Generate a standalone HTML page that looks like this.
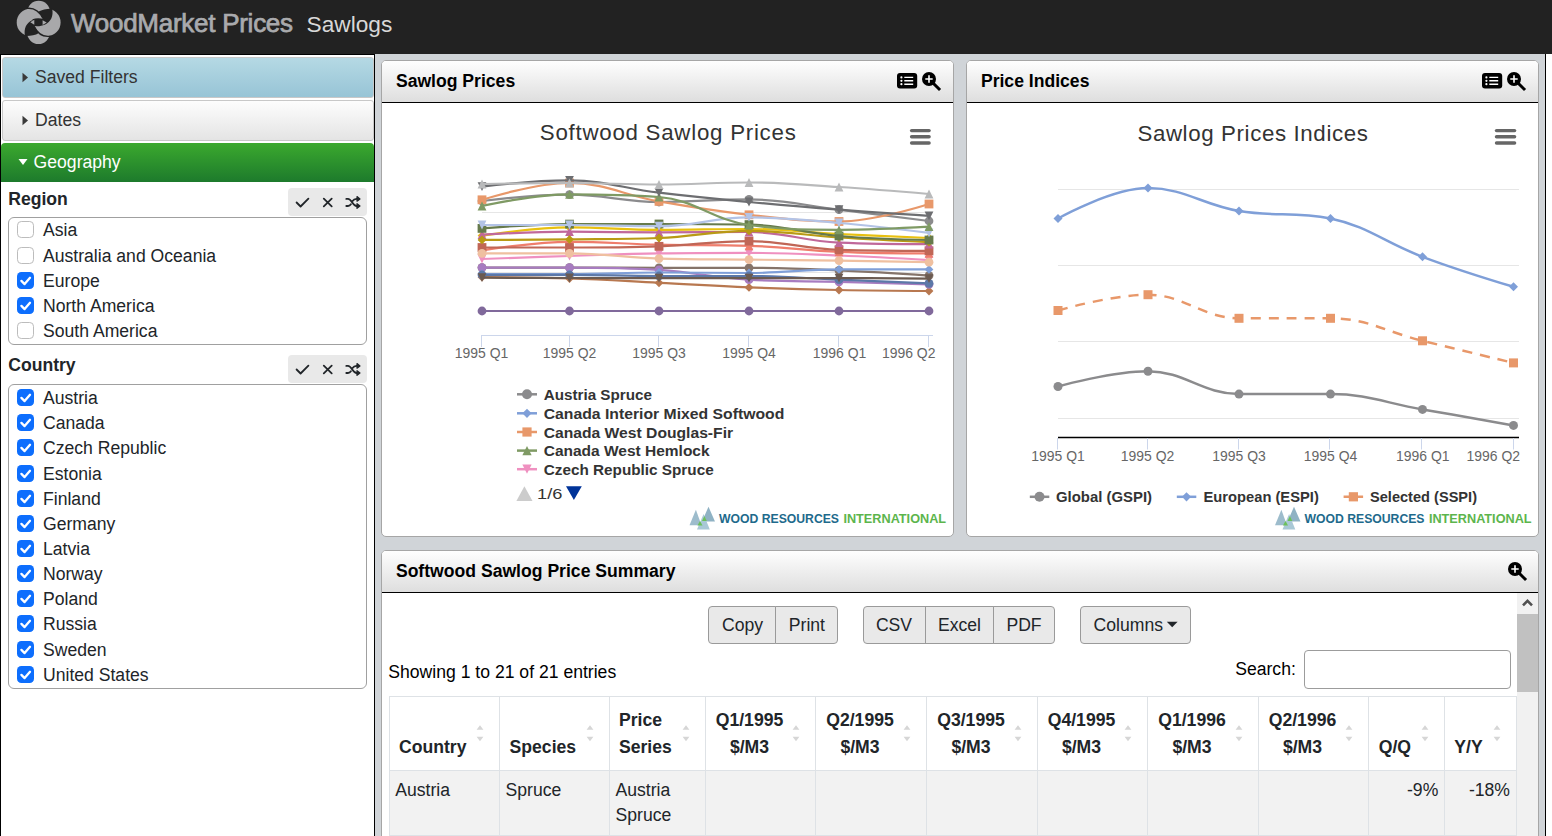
<!DOCTYPE html>
<html><head><meta charset="utf-8">
<style>
*{box-sizing:border-box;}
html,body{margin:0;padding:0;width:1552px;height:836px;overflow:hidden;background:#fff;font-family:"Liberation Sans",sans-serif;color:#212529;}
.a{position:absolute;}
.t{position:absolute;white-space:nowrap;line-height:1;}
#hdr{left:0;top:0;width:1552px;height:54px;background:#222;}
#side{left:0;top:54px;width:375px;height:800px;border:1px solid #000;border-bottom:none;background:#fff;}
#main{left:375px;top:54px;width:1171px;height:800px;background:#d0d4d8;border-right:1px solid #000;}
.acc{position:absolute;left:2px;width:372px;height:41px;border:1px solid #c8c8c8;border-radius:3px;}
.acc .lbl{position:absolute;left:32px;font-size:17.6px;line-height:1;white-space:nowrap;color:#333;}
.tb{position:absolute;left:288px;width:79px;height:28px;background:#e9e9e9;border-radius:4px;}
.fs{position:absolute;left:8px;width:359px;border:1px solid #a0a0a0;border-radius:6px;}
.ck{position:absolute;left:17px;width:17.4px;height:17.6px;border-radius:4.3px;}
.ck.on{background:#0d6efd;}
.ck.off{border:1px solid #bcbcbc;background:#fff;}
.cl{position:absolute;left:43px;font-size:17.6px;line-height:1;white-space:nowrap;color:#212529;}
.pnl{position:absolute;background:#fff;border:1px solid #a6a6a6;border-radius:5px;overflow:hidden;}
.ph{position:absolute;left:0;top:0;right:0;height:42px;background:linear-gradient(#fefefe,#dedede);border-bottom:1px solid #000;}
.pt{position:absolute;font-weight:bold;font-size:17.6px;line-height:1;white-space:nowrap;color:#000;}
.btn{position:absolute;top:606px;height:38px;background:#e9e9e9;border:1px solid #9a9a9a;}
.bt{position:absolute;font-size:17.6px;line-height:1;white-space:nowrap;color:#212529;}
.th{position:absolute;font-weight:bold;font-size:17.6px;line-height:1;white-space:nowrap;color:#212529;}
.td{position:absolute;font-size:17.6px;line-height:1;white-space:nowrap;color:#212529;}
.vl{position:absolute;width:1px;background:#dee2e6;}
.hc{font-family:"Liberation Sans",sans-serif;}
</style></head><body>
<div id="hdr" class="a">
<svg class="a" style="left:14px;top:0px" width="50" height="46" viewBox="0 0 50 46">
<g fill="#a8a8aa">
<circle cx="24.7" cy="12" r="11.3"/>
<circle cx="24.5" cy="32.6" r="11.4"/>
<circle cx="16.3" cy="22.4" r="13.6"/>
<circle cx="33" cy="22.4" r="13.6"/>
</g>
<path d="M24.2 11.8 C 28.5 9.4, 33 8.6, 38.2 8.8 C 39.6 16, 37 22, 30.8 24.8 C 29.6 20, 27.5 15, 24.2 11.8 Z" fill="#222"/>
<path d="M25.0 33.0 C 20.7 35.4, 16.2 36.2, 11.0 36.0 C 9.6 28.8, 12.2 22.8, 18.4 20.0 C 19.6 24.8, 21.7 29.8, 25.0 33.0 Z" fill="#222"/>
<path d="M18.5 19.2 C 22 17.8 26.5 17.8 30.5 19.4 L 31 24.5 C 27 26.5 22 26.7 18.3 25.6 Z" fill="#222"/>
<path d="M16.3 22.3 L 20.3 19.8 L 20.3 24.8 Z M 32.7 22.6 L 28.6 20.2 L 28.6 25.0 Z" fill="#a8a8aa"/>
<path d="M12.8 8.4 C 19 7.6, 25 10.5, 29 18.5" stroke="#222" stroke-width="1.3" fill="none"/>
<path d="M36.4 36.2 C 30 37.2, 24 34.5, 20.2 26.4" stroke="#222" stroke-width="1.3" fill="none"/>
<path d="M38 9 C 39 8.2 38.5 8.5 38.2 8.4" stroke="#222" stroke-width="1" fill="none"/>
</svg>
<div class="t" style="left:71px;top:10px;font-size:26px;font-weight:normal;color:#a9aaad;letter-spacing:-0.27px;-webkit-text-stroke:0.75px #a9aaad;">WoodMarket Prices</div>
<div class="t" style="left:306.5px;top:13px;font-size:22.7px;color:#d8d8d8;">Sawlogs</div>
</div>

<div id="side" class="a"></div>
<div id="main" class="a"></div>

<!-- sidebar accordion -->
<div class="acc" style="top:57px;background:linear-gradient(#b5d9e4,#97c4d6);">
 <svg class="a" style="left:18.2px;top:14.3px" width="8" height="11"><path d="M1.5 0.8 L7 5.5 L1.5 10.2 Z" fill="#3a3a3a"/></svg>
 <div class="lbl" style="top:10.6px;">Saved Filters</div>
</div>
<div class="acc" style="top:100px;background:linear-gradient(#fdfdfd,#e4e4e4);">
 <svg class="a" style="left:18.2px;top:14.3px" width="8" height="11"><path d="M1.5 0.8 L7 5.5 L1.5 10.2 Z" fill="#3a3a3a"/></svg>
 <div class="lbl" style="top:10.9px;">Dates</div>
</div>
<div class="a" style="left:1px;top:143px;width:373px;height:39px;border-radius:4px 4px 0 0;background:linear-gradient(#3ba92e,#1d7a2c);">
 <svg class="a" style="left:16px;top:15px" width="12" height="8"><path d="M1.5 1 L10.5 1 L6 7 Z" fill="#fff"/></svg>
 <div class="lbl" style="position:absolute;left:32.6px;top:10.6px;font-size:17.6px;line-height:1;color:#fff;white-space:nowrap;">Geography</div>
</div>

<div class="pt" style="left:8.2px;top:190.8px;color:#212529;">Region</div>
<div class="tb" style="top:188px;"><svg class="a" style="left:0;top:0" width="79" height="28">
<path d="M8.6 14.5 L12.6 18.5 L20.4 10.7" stroke="#212529" stroke-width="1.8" fill="none" stroke-linecap="round" stroke-linejoin="round"/>
<path d="M35.8 10.7 L43.7 18.3 M43.7 10.7 L35.8 18.3" stroke="#212529" stroke-width="1.8" fill="none" stroke-linecap="round"/>
<path d="M58.3 10.9 L60 10.9 C63.5 10.9 65 18 68.5 18 L69.5 18 M58.3 18 L60 18 C61.5 18 62.3 17.2 62.9 16.3 M64.6 13 C65.5 11.6 66.8 10.9 68.5 10.9 L69.5 10.9" stroke="#212529" stroke-width="1.8" fill="none" stroke-linecap="round"/>
<path d="M69 8.6 L72 10.9 L69 13.2 Z M69 15.7 L72 18 L69 20.4 Z" fill="#212529" stroke="#212529" stroke-width="1.2" stroke-linejoin="round"/>
</svg></div>
<div class="fs" style="top:217px;height:128px;"></div>
<div class="ck off" style="top:220.80px"></div>
<div class="cl" style="top:221.60px">Asia</div>
<div class="ck off" style="top:246.80px"></div>
<div class="cl" style="top:247.60px">Australia and Oceania</div>
<div class="ck on" style="top:271.80px"><svg width="18" height="18" style="position:absolute;left:0;top:0"><path d="M4.4 8.9 L7.6 12.1 L13 5.8" stroke="#fff" stroke-width="2.3" fill="none" stroke-linecap="round" stroke-linejoin="round"/></svg></div>
<div class="cl" style="top:272.60px">Europe</div>
<div class="ck on" style="top:296.80px"><svg width="18" height="18" style="position:absolute;left:0;top:0"><path d="M4.4 8.9 L7.6 12.1 L13 5.8" stroke="#fff" stroke-width="2.3" fill="none" stroke-linecap="round" stroke-linejoin="round"/></svg></div>
<div class="cl" style="top:297.60px">North America</div>
<div class="ck off" style="top:321.80px"></div>
<div class="cl" style="top:322.60px">South America</div>

<div class="pt" style="left:8.2px;top:357px;color:#212529;">Country</div>
<div class="tb" style="top:355px;"><svg class="a" style="left:0;top:0" width="79" height="28">
<path d="M8.6 14.5 L12.6 18.5 L20.4 10.7" stroke="#212529" stroke-width="1.8" fill="none" stroke-linecap="round" stroke-linejoin="round"/>
<path d="M35.8 10.7 L43.7 18.3 M43.7 10.7 L35.8 18.3" stroke="#212529" stroke-width="1.8" fill="none" stroke-linecap="round"/>
<path d="M58.3 10.9 L60 10.9 C63.5 10.9 65 18 68.5 18 L69.5 18 M58.3 18 L60 18 C61.5 18 62.3 17.2 62.9 16.3 M64.6 13 C65.5 11.6 66.8 10.9 68.5 10.9 L69.5 10.9" stroke="#212529" stroke-width="1.8" fill="none" stroke-linecap="round"/>
<path d="M69 8.6 L72 10.9 L69 13.2 Z M69 15.7 L72 18 L69 20.4 Z" fill="#212529" stroke="#212529" stroke-width="1.2" stroke-linejoin="round"/>
</svg></div>
<div class="fs" style="top:384px;height:305px;"></div>
<div class="ck on" style="top:388.80px"><svg width="18" height="18" style="position:absolute;left:0;top:0"><path d="M4.4 8.9 L7.6 12.1 L13 5.8" stroke="#fff" stroke-width="2.3" fill="none" stroke-linecap="round" stroke-linejoin="round"/></svg></div>
<div class="cl" style="top:389.60px">Austria</div>
<div class="ck on" style="top:413.80px"><svg width="18" height="18" style="position:absolute;left:0;top:0"><path d="M4.4 8.9 L7.6 12.1 L13 5.8" stroke="#fff" stroke-width="2.3" fill="none" stroke-linecap="round" stroke-linejoin="round"/></svg></div>
<div class="cl" style="top:414.60px">Canada</div>
<div class="ck on" style="top:438.80px"><svg width="18" height="18" style="position:absolute;left:0;top:0"><path d="M4.4 8.9 L7.6 12.1 L13 5.8" stroke="#fff" stroke-width="2.3" fill="none" stroke-linecap="round" stroke-linejoin="round"/></svg></div>
<div class="cl" style="top:439.60px">Czech Republic</div>
<div class="ck on" style="top:464.80px"><svg width="18" height="18" style="position:absolute;left:0;top:0"><path d="M4.4 8.9 L7.6 12.1 L13 5.8" stroke="#fff" stroke-width="2.3" fill="none" stroke-linecap="round" stroke-linejoin="round"/></svg></div>
<div class="cl" style="top:465.60px">Estonia</div>
<div class="ck on" style="top:489.80px"><svg width="18" height="18" style="position:absolute;left:0;top:0"><path d="M4.4 8.9 L7.6 12.1 L13 5.8" stroke="#fff" stroke-width="2.3" fill="none" stroke-linecap="round" stroke-linejoin="round"/></svg></div>
<div class="cl" style="top:490.60px">Finland</div>
<div class="ck on" style="top:514.80px"><svg width="18" height="18" style="position:absolute;left:0;top:0"><path d="M4.4 8.9 L7.6 12.1 L13 5.8" stroke="#fff" stroke-width="2.3" fill="none" stroke-linecap="round" stroke-linejoin="round"/></svg></div>
<div class="cl" style="top:515.60px">Germany</div>
<div class="ck on" style="top:539.80px"><svg width="18" height="18" style="position:absolute;left:0;top:0"><path d="M4.4 8.9 L7.6 12.1 L13 5.8" stroke="#fff" stroke-width="2.3" fill="none" stroke-linecap="round" stroke-linejoin="round"/></svg></div>
<div class="cl" style="top:540.60px">Latvia</div>
<div class="ck on" style="top:564.80px"><svg width="18" height="18" style="position:absolute;left:0;top:0"><path d="M4.4 8.9 L7.6 12.1 L13 5.8" stroke="#fff" stroke-width="2.3" fill="none" stroke-linecap="round" stroke-linejoin="round"/></svg></div>
<div class="cl" style="top:565.60px">Norway</div>
<div class="ck on" style="top:589.80px"><svg width="18" height="18" style="position:absolute;left:0;top:0"><path d="M4.4 8.9 L7.6 12.1 L13 5.8" stroke="#fff" stroke-width="2.3" fill="none" stroke-linecap="round" stroke-linejoin="round"/></svg></div>
<div class="cl" style="top:590.60px">Poland</div>
<div class="ck on" style="top:614.80px"><svg width="18" height="18" style="position:absolute;left:0;top:0"><path d="M4.4 8.9 L7.6 12.1 L13 5.8" stroke="#fff" stroke-width="2.3" fill="none" stroke-linecap="round" stroke-linejoin="round"/></svg></div>
<div class="cl" style="top:615.60px">Russia</div>
<div class="ck on" style="top:640.80px"><svg width="18" height="18" style="position:absolute;left:0;top:0"><path d="M4.4 8.9 L7.6 12.1 L13 5.8" stroke="#fff" stroke-width="2.3" fill="none" stroke-linecap="round" stroke-linejoin="round"/></svg></div>
<div class="cl" style="top:641.60px">Sweden</div>
<div class="ck on" style="top:665.80px"><svg width="18" height="18" style="position:absolute;left:0;top:0"><path d="M4.4 8.9 L7.6 12.1 L13 5.8" stroke="#fff" stroke-width="2.3" fill="none" stroke-linecap="round" stroke-linejoin="round"/></svg></div>
<div class="cl" style="top:666.60px">United States</div>

<!-- panels -->
<div class="pnl" style="left:381px;top:60px;width:573px;height:477px;">
 <div class="ph"></div>
 <div class="pt" style="left:13.9px;top:11.5px;">Sawlog Prices</div>
 <svg class="a" style="left:514.9px;top:11.9px" width="21" height="16">
<rect x="0" y="0" width="20.2" height="15.4" rx="3" fill="#000"/>
<circle cx="4.4" cy="4.4" r="1.1" fill="#fff"/><circle cx="4.4" cy="7.8" r="1.1" fill="#fff"/><circle cx="4.4" cy="11.2" r="1.1" fill="#fff"/>
<path d="M7.3 4.4 H16.2 M7.3 7.8 H16.2 M7.3 11.2 H16.2" stroke="#fff" stroke-width="1.4"/>
</svg><svg class="a" style="left:538.1px;top:8.9px" width="22" height="22">
<circle cx="9" cy="9" r="7" fill="#000"/>
<path d="M13 13 L19 19" stroke="#000" stroke-width="3" stroke-linecap="square"/>
<path d="M9 5.3 V12.7 M5.3 9 H12.7" stroke="#fff" stroke-width="1.6"/>
</svg>
</div>
<div class="pnl" style="left:966px;top:60px;width:573px;height:477px;">
 <div class="ph"></div>
 <div class="pt" style="left:13.9px;top:11.5px;">Price Indices</div>
 <svg class="a" style="left:514.9px;top:11.9px" width="21" height="16">
<rect x="0" y="0" width="20.2" height="15.4" rx="3" fill="#000"/>
<circle cx="4.4" cy="4.4" r="1.1" fill="#fff"/><circle cx="4.4" cy="7.8" r="1.1" fill="#fff"/><circle cx="4.4" cy="11.2" r="1.1" fill="#fff"/>
<path d="M7.3 4.4 H16.2 M7.3 7.8 H16.2 M7.3 11.2 H16.2" stroke="#fff" stroke-width="1.4"/>
</svg><svg class="a" style="left:538.1px;top:8.9px" width="22" height="22">
<circle cx="9" cy="9" r="7" fill="#000"/>
<path d="M13 13 L19 19" stroke="#000" stroke-width="3" stroke-linecap="square"/>
<path d="M9 5.3 V12.7 M5.3 9 H12.7" stroke="#fff" stroke-width="1.6"/>
</svg>
</div>
<div class="pnl" style="left:381px;top:550px;width:1158px;height:320px;">
 <div class="ph"></div>
 <div class="pt" style="left:13.9px;top:11.5px;">Softwood Sawlog Price Summary</div>
 <svg class="a" style="left:1123.6px;top:9.3px" width="22" height="22">
<circle cx="9" cy="9" r="7" fill="#000"/>
<path d="M13 13 L19 19" stroke="#000" stroke-width="3" stroke-linecap="square"/>
<path d="M9 5.3 V12.7 M5.3 9 H12.7" stroke="#fff" stroke-width="1.6"/>
</svg>
</div>

<svg class="a" style="left:0;top:0;pointer-events:none" width="1552" height="836" font-family="Liberation Sans, sans-serif">
<text x="539.8" y="140" font-size="22.3" fill="#333" text-anchor="start" font-weight="normal" textLength="256" lengthAdjust="spacing">Softwood Sawlog Prices</text>
<path d="M911.6 130.6 H929.1" stroke="#666" stroke-width="3.4" stroke-linecap="round"/><path d="M911.6 136.8 H929.1" stroke="#666" stroke-width="3.4" stroke-linecap="round"/><path d="M911.6 143 H929.1" stroke="#666" stroke-width="3.4" stroke-linecap="round"/>
<path d="M482 212.5 H933" stroke="#e6e6e6" stroke-width="1"/>
<path d="M482 272.5 H933" stroke="#e6e6e6" stroke-width="1"/>
<path d="M481 335.5 H933" stroke="#ccd6eb" stroke-width="1"/>
<path d="M481.5 335 V347" stroke="#ccd6eb" stroke-width="1"/>
<path d="M569.5 335 V347" stroke="#ccd6eb" stroke-width="1"/>
<path d="M658.5 335 V347" stroke="#ccd6eb" stroke-width="1"/>
<path d="M748.5 335 V347" stroke="#ccd6eb" stroke-width="1"/>
<path d="M838.5 335 V347" stroke="#ccd6eb" stroke-width="1"/>
<path d="M928.5 335 V347" stroke="#ccd6eb" stroke-width="1"/>
<text x="481.5" y="358.2" font-size="14" fill="#666" text-anchor="middle" font-weight="normal" textLength="53.5" lengthAdjust="spacingAndGlyphs">1995 Q1</text>
<text x="569.5" y="358.2" font-size="14" fill="#666" text-anchor="middle" font-weight="normal" textLength="53.5" lengthAdjust="spacingAndGlyphs">1995 Q2</text>
<text x="659" y="358.2" font-size="14" fill="#666" text-anchor="middle" font-weight="normal" textLength="53.5" lengthAdjust="spacingAndGlyphs">1995 Q3</text>
<text x="749" y="358.2" font-size="14" fill="#666" text-anchor="middle" font-weight="normal" textLength="53.5" lengthAdjust="spacingAndGlyphs">1995 Q4</text>
<text x="839.6" y="358.2" font-size="14" fill="#666" text-anchor="middle" font-weight="normal" textLength="53.5" lengthAdjust="spacingAndGlyphs">1996 Q1</text>
<text x="908.7" y="358.2" font-size="14" fill="#666" text-anchor="middle" font-weight="normal" textLength="53.5" lengthAdjust="spacingAndGlyphs">1996 Q2</text>
<path d="M 482.0 311.0 C 482.0 311.0 534.5 311.0 569.5 311.0 C 605.3 311.0 623.2 311.0 659.0 311.0 C 695.0 311.0 713.0 311.0 749.0 311.0 C 785.0 311.0 803.0 311.0 839.0 311.0 C 875.0 311.0 929.0 311.0 929.0 311.0" fill="none" stroke="#80699b" stroke-width="2.2"/>
<circle cx="482.0" cy="311.0" r="4.4" fill="#80699b"/>
<circle cx="569.5" cy="311.0" r="4.4" fill="#80699b"/>
<circle cx="659.0" cy="311.0" r="4.4" fill="#80699b"/>
<circle cx="749.0" cy="311.0" r="4.4" fill="#80699b"/>
<circle cx="839.0" cy="311.0" r="4.4" fill="#80699b"/>
<circle cx="929.0" cy="311.0" r="4.4" fill="#80699b"/>
<path d="M 482.0 277.2 C 482.0 277.2 534.5 277.4 569.5 278.5 C 605.3 279.6 623.2 281.0 659.0 282.8 C 695.0 284.6 713.0 286.0 749.0 287.4 C 785.0 288.8 803.0 289.3 839.0 290.0 C 875.0 290.7 929.0 291.0 929.0 291.0" fill="none" stroke="#b87850" stroke-width="2.2"/>
<path d="M 482.0 272.8 L 486.4 277.2 L 482.0 281.6 L 477.6 277.2 Z" fill="#b87850"/>
<path d="M 569.5 274.1 L 573.9 278.5 L 569.5 282.9 L 565.1 278.5 Z" fill="#b87850"/>
<path d="M 659.0 278.4 L 663.4 282.8 L 659.0 287.2 L 654.6 282.8 Z" fill="#b87850"/>
<path d="M 749.0 283.0 L 753.4 287.4 L 749.0 291.8 L 744.6 287.4 Z" fill="#b87850"/>
<path d="M 839.0 285.6 L 843.4 290.0 L 839.0 294.4 L 834.6 290.0 Z" fill="#b87850"/>
<path d="M 929.0 286.6 L 933.4 291.0 L 929.0 295.4 L 924.6 291.0 Z" fill="#b87850"/>
<path d="M 482.0 267.6 C 482.0 267.6 534.5 267.6 569.5 267.6 C 605.3 267.6 623.2 267.8 659.0 267.8 C 695.0 267.8 713.0 267.8 749.0 267.8 C 785.0 267.8 803.0 268.8 839.0 270.4 C 875.0 272.0 929.0 275.6 929.0 275.6" fill="none" stroke="#85746a" stroke-width="2.2"/>
<circle cx="482.0" cy="267.6" r="4.4" fill="#85746a"/>
<circle cx="569.5" cy="267.6" r="4.4" fill="#85746a"/>
<circle cx="659.0" cy="267.8" r="4.4" fill="#85746a"/>
<circle cx="749.0" cy="267.8" r="4.4" fill="#85746a"/>
<circle cx="839.0" cy="270.4" r="4.4" fill="#85746a"/>
<circle cx="929.0" cy="275.6" r="4.4" fill="#85746a"/>
<path d="M 482.0 267.6 C 482.0 267.6 534.5 267.6 569.5 267.6 C 605.3 267.6 623.2 267.6 659.0 269.9 C 695.0 272.2 713.0 277.6 749.0 279.7 C 785.0 281.8 803.0 280.9 839.0 281.8 C 875.0 282.7 929.0 284.3 929.0 284.3" fill="none" stroke="#a77cc0" stroke-width="2.2"/>
<circle cx="482.0" cy="267.6" r="4.4" fill="#a77cc0"/>
<circle cx="569.5" cy="267.6" r="4.4" fill="#a77cc0"/>
<circle cx="659.0" cy="269.9" r="4.4" fill="#a77cc0"/>
<circle cx="749.0" cy="279.7" r="4.4" fill="#a77cc0"/>
<circle cx="839.0" cy="281.8" r="4.4" fill="#a77cc0"/>
<circle cx="929.0" cy="284.3" r="4.4" fill="#a77cc0"/>
<path d="M 482.0 274.0 C 482.0 274.0 534.5 274.0 569.5 274.0 C 605.3 274.0 623.2 272.5 659.0 272.5 C 695.0 272.5 713.0 273.0 749.0 273.0 C 785.0 273.0 803.0 269.4 839.0 269.4 C 875.0 269.4 929.0 269.4 929.0 269.4" fill="none" stroke="#7f9fd8" stroke-width="2.2"/>
<path d="M 482.0 269.6 L 486.4 274.0 L 482.0 278.4 L 477.6 274.0 Z" fill="#7f9fd8"/>
<path d="M 569.5 269.6 L 573.9 274.0 L 569.5 278.4 L 565.1 274.0 Z" fill="#7f9fd8"/>
<path d="M 659.0 268.1 L 663.4 272.5 L 659.0 276.9 L 654.6 272.5 Z" fill="#7f9fd8"/>
<path d="M 749.0 268.6 L 753.4 273.0 L 749.0 277.4 L 744.6 273.0 Z" fill="#7f9fd8"/>
<path d="M 839.0 265.0 L 843.4 269.4 L 839.0 273.8 L 834.6 269.4 Z" fill="#7f9fd8"/>
<path d="M 929.0 265.0 L 933.4 269.4 L 929.0 273.8 L 924.6 269.4 Z" fill="#7f9fd8"/>
<path d="M 482.0 274.8 C 482.0 274.8 534.5 274.8 569.5 274.8 C 605.3 274.8 623.2 276.0 659.0 276.0 C 695.0 276.0 713.0 276.0 749.0 276.0 C 785.0 276.0 803.0 278.2 839.0 279.7 C 875.0 281.2 929.0 283.3 929.0 283.3" fill="none" stroke="#5c78a8" stroke-width="2.2"/>
<circle cx="482.0" cy="274.8" r="4.4" fill="#5c78a8"/>
<circle cx="569.5" cy="274.8" r="4.4" fill="#5c78a8"/>
<circle cx="659.0" cy="276.0" r="4.4" fill="#5c78a8"/>
<circle cx="749.0" cy="276.0" r="4.4" fill="#5c78a8"/>
<circle cx="839.0" cy="279.7" r="4.4" fill="#5c78a8"/>
<circle cx="929.0" cy="283.3" r="4.4" fill="#5c78a8"/>
<path d="M 482.0 277.7 C 482.0 277.7 534.5 277.9 569.5 278.0 C 605.3 278.1 623.2 278.1 659.0 278.1 C 695.0 278.1 713.0 278.1 749.0 278.1 C 785.0 278.1 803.0 278.1 839.0 278.1 C 875.0 278.1 929.0 278.7 929.0 278.7" fill="none" stroke="#6b5a50" stroke-width="2.2"/>
<path d="M 477.6 273.3 L 486.4 273.3 L 482.0 282.1 Z" fill="#6b5a50"/>
<path d="M 565.1 273.6 L 573.9 273.6 L 569.5 282.4 Z" fill="#6b5a50"/>
<path d="M 654.6 273.7 L 663.4 273.7 L 659.0 282.5 Z" fill="#6b5a50"/>
<path d="M 744.6 273.7 L 753.4 273.7 L 749.0 282.5 Z" fill="#6b5a50"/>
<path d="M 834.6 273.7 L 843.4 273.7 L 839.0 282.5 Z" fill="#6b5a50"/>
<path d="M 924.6 274.3 L 933.4 274.3 L 929.0 283.1 Z" fill="#6b5a50"/>
<path d="M 482.0 235.6 C 482.0 235.6 534.5 227.4 569.5 227.4 C 605.3 227.4 623.2 229.8 659.0 229.8 C 695.0 229.8 713.0 229.0 749.0 229.0 C 785.0 229.0 803.0 232.2 839.0 234.0 C 875.0 235.8 929.0 238.0 929.0 238.0" fill="none" stroke="#e8c010" stroke-width="2.2"/>
<path d="M 482.0 231.2 L 486.4 235.6 L 482.0 240.0 L 477.6 235.6 Z" fill="#e8c010"/>
<path d="M 569.5 223.0 L 573.9 227.4 L 569.5 231.8 L 565.1 227.4 Z" fill="#e8c010"/>
<path d="M 659.0 225.4 L 663.4 229.8 L 659.0 234.2 L 654.6 229.8 Z" fill="#e8c010"/>
<path d="M 749.0 224.6 L 753.4 229.0 L 749.0 233.4 L 744.6 229.0 Z" fill="#e8c010"/>
<path d="M 839.0 229.6 L 843.4 234.0 L 839.0 238.4 L 834.6 234.0 Z" fill="#e8c010"/>
<path d="M 929.0 233.6 L 933.4 238.0 L 929.0 242.4 L 924.6 238.0 Z" fill="#e8c010"/>
<path d="M 482.0 259.0 C 482.0 259.0 534.5 257.1 569.5 256.0 C 605.3 254.9 623.2 253.9 659.0 253.4 C 695.0 252.9 713.0 252.9 749.0 252.9 C 785.0 252.9 803.0 254.1 839.0 255.5 C 875.0 256.9 929.0 260.1 929.0 260.1" fill="none" stroke="#ef90c0" stroke-width="2.2"/>
<path d="M 477.6 254.6 L 486.4 254.6 L 482.0 263.4 Z" fill="#ef90c0"/>
<path d="M 565.1 251.6 L 573.9 251.6 L 569.5 260.4 Z" fill="#ef90c0"/>
<path d="M 654.6 249.0 L 663.4 249.0 L 659.0 257.8 Z" fill="#ef90c0"/>
<path d="M 744.6 248.5 L 753.4 248.5 L 749.0 257.3 Z" fill="#ef90c0"/>
<path d="M 834.6 251.1 L 843.4 251.1 L 839.0 259.9 Z" fill="#ef90c0"/>
<path d="M 924.6 255.7 L 933.4 255.7 L 929.0 264.5 Z" fill="#ef90c0"/>
<path d="M 482.0 250.4 C 482.0 250.4 534.5 241.8 569.5 241.8 C 605.3 241.8 623.2 243.9 659.0 244.7 C 695.0 245.5 713.0 244.7 749.0 245.8 C 785.0 246.9 803.0 250.4 839.0 251.9 C 875.0 253.4 929.0 253.4 929.0 253.4" fill="none" stroke="#ef7d6c" stroke-width="2.2"/>
<path d="M 482.0 246.0 L 486.4 254.8 L 477.6 254.8 Z" fill="#ef7d6c"/>
<path d="M 569.5 237.4 L 573.9 246.2 L 565.1 246.2 Z" fill="#ef7d6c"/>
<path d="M 659.0 240.3 L 663.4 249.1 L 654.6 249.1 Z" fill="#ef7d6c"/>
<path d="M 749.0 241.4 L 753.4 250.2 L 744.6 250.2 Z" fill="#ef7d6c"/>
<path d="M 839.0 247.5 L 843.4 256.3 L 834.6 256.3 Z" fill="#ef7d6c"/>
<path d="M 929.0 249.0 L 933.4 257.8 L 924.6 257.8 Z" fill="#ef7d6c"/>
<path d="M 482.0 247.5 C 482.0 247.5 534.5 247.5 569.5 247.5 C 605.3 247.5 623.2 247.5 659.0 246.3 C 695.0 245.1 713.0 241.1 749.0 241.1 C 785.0 241.1 803.0 248.8 839.0 249.8 C 875.0 250.8 929.0 250.8 929.0 250.8" fill="none" stroke="#c06656" stroke-width="2.2"/>
<rect x="477.6" y="243.1" width="8.8" height="8.8" fill="#c06656"/>
<rect x="565.1" y="243.1" width="8.8" height="8.8" fill="#c06656"/>
<rect x="654.6" y="241.9" width="8.8" height="8.8" fill="#c06656"/>
<rect x="744.6" y="236.7" width="8.8" height="8.8" fill="#c06656"/>
<rect x="834.6" y="245.4" width="8.8" height="8.8" fill="#c06656"/>
<rect x="924.6" y="246.4" width="8.8" height="8.8" fill="#c06656"/>
<path d="M 482.0 253.3 C 482.0 253.3 534.5 253.3 569.5 253.3 C 605.3 253.3 623.2 257.6 659.0 258.6 C 695.0 259.6 713.0 259.2 749.0 259.6 C 785.0 260.0 803.0 260.1 839.0 260.6 C 875.0 261.1 929.0 262.2 929.0 262.2" fill="none" stroke="#efc0a0" stroke-width="2.2"/>
<circle cx="482.0" cy="253.3" r="4.4" fill="#efc0a0"/>
<circle cx="569.5" cy="253.3" r="4.4" fill="#efc0a0"/>
<circle cx="659.0" cy="258.6" r="4.4" fill="#efc0a0"/>
<circle cx="749.0" cy="259.6" r="4.4" fill="#efc0a0"/>
<circle cx="839.0" cy="260.6" r="4.4" fill="#efc0a0"/>
<circle cx="929.0" cy="262.2" r="4.4" fill="#efc0a0"/>
<path d="M 482.0 234.6 C 482.0 234.6 534.5 231.7 569.5 231.7 C 605.3 231.7 623.2 232.4 659.0 232.4 C 695.0 232.4 713.0 232.0 749.0 232.0 C 785.0 232.0 803.0 241.2 839.0 242.7 C 875.0 244.2 929.0 244.2 929.0 244.2" fill="none" stroke="#c0689a" stroke-width="2.2"/>
<path d="M 482.0 230.2 L 486.4 239.0 L 477.6 239.0 Z" fill="#c0689a"/>
<path d="M 569.5 227.3 L 573.9 236.1 L 565.1 236.1 Z" fill="#c0689a"/>
<path d="M 659.0 228.0 L 663.4 236.8 L 654.6 236.8 Z" fill="#c0689a"/>
<path d="M 749.0 227.6 L 753.4 236.4 L 744.6 236.4 Z" fill="#c0689a"/>
<path d="M 839.0 238.3 L 843.4 247.1 L 834.6 247.1 Z" fill="#c0689a"/>
<path d="M 929.0 239.8 L 933.4 248.6 L 924.6 248.6 Z" fill="#c0689a"/>
<path d="M 482.0 239.9 C 482.0 239.9 534.5 239.8 569.5 239.4 C 605.3 239.0 623.2 239.4 659.0 238.0 C 695.0 236.6 713.0 230.8 749.0 230.8 C 785.0 230.8 803.0 235.2 839.0 237.5 C 875.0 239.8 929.0 242.2 929.0 242.2" fill="none" stroke="#b99a14" stroke-width="2.2"/>
<path d="M 482.0 235.5 L 486.4 239.9 L 482.0 244.3 L 477.6 239.9 Z" fill="#b99a14"/>
<path d="M 569.5 235.0 L 573.9 239.4 L 569.5 243.8 L 565.1 239.4 Z" fill="#b99a14"/>
<path d="M 659.0 233.6 L 663.4 238.0 L 659.0 242.4 L 654.6 238.0 Z" fill="#b99a14"/>
<path d="M 749.0 226.4 L 753.4 230.8 L 749.0 235.2 L 744.6 230.8 Z" fill="#b99a14"/>
<path d="M 839.0 233.1 L 843.4 237.5 L 839.0 241.9 L 834.6 237.5 Z" fill="#b99a14"/>
<path d="M 929.0 237.8 L 933.4 242.2 L 929.0 246.6 L 924.6 242.2 Z" fill="#b99a14"/>
<path d="M 482.0 228.4 C 482.0 228.4 534.5 224.2 569.5 224.1 C 605.3 224.0 623.2 224.0 659.0 224.0 C 695.0 224.0 713.0 224.0 749.0 224.6 C 785.0 225.2 803.0 232.9 839.0 236.0 C 875.0 239.1 929.0 240.0 929.0 240.0" fill="none" stroke="#667a4c" stroke-width="2.2"/>
<rect x="477.6" y="224.0" width="8.8" height="8.8" fill="#667a4c"/>
<rect x="565.1" y="219.7" width="8.8" height="8.8" fill="#667a4c"/>
<rect x="654.6" y="219.6" width="8.8" height="8.8" fill="#667a4c"/>
<rect x="744.6" y="220.2" width="8.8" height="8.8" fill="#667a4c"/>
<rect x="834.6" y="231.6" width="8.8" height="8.8" fill="#667a4c"/>
<rect x="924.6" y="235.6" width="8.8" height="8.8" fill="#667a4c"/>
<path d="M 482.0 201.0 C 482.0 201.0 534.5 194.7 569.5 194.7 C 605.3 194.7 623.2 202.0 659.0 202.0 C 695.0 202.0 713.0 199.4 749.0 199.4 C 785.0 199.4 803.0 205.4 839.0 209.7 C 875.0 214.0 929.0 221.0 929.0 221.0" fill="none" stroke="#8b8b8d" stroke-width="2.2"/>
<circle cx="482.0" cy="201.0" r="4.4" fill="#8b8b8d"/>
<circle cx="569.5" cy="194.7" r="4.4" fill="#8b8b8d"/>
<circle cx="659.0" cy="202.0" r="4.4" fill="#8b8b8d"/>
<circle cx="749.0" cy="199.4" r="4.4" fill="#8b8b8d"/>
<circle cx="839.0" cy="209.7" r="4.4" fill="#8b8b8d"/>
<circle cx="929.0" cy="221.0" r="4.4" fill="#8b8b8d"/>
<path d="M 482.0 199.8 C 482.0 199.8 534.5 183.0 569.5 183.0 C 605.3 183.0 623.2 195.1 659.0 201.4 C 695.0 207.8 713.0 210.8 749.0 214.8 C 785.0 218.8 803.0 221.5 839.0 221.5 C 875.0 221.5 929.0 204.0 929.0 204.0" fill="none" stroke="#e8986a" stroke-width="2.2"/>
<rect x="477.6" y="195.4" width="8.8" height="8.8" fill="#e8986a"/>
<rect x="565.1" y="178.6" width="8.8" height="8.8" fill="#e8986a"/>
<rect x="654.6" y="197.0" width="8.8" height="8.8" fill="#e8986a"/>
<rect x="744.6" y="210.4" width="8.8" height="8.8" fill="#e8986a"/>
<rect x="834.6" y="217.1" width="8.8" height="8.8" fill="#e8986a"/>
<rect x="924.6" y="199.6" width="8.8" height="8.8" fill="#e8986a"/>
<path d="M 482.0 225.0 C 482.0 225.0 534.5 225.0 569.5 225.0 C 605.3 225.0 623.2 226.2 659.0 226.2 C 695.0 226.2 713.0 217.4 749.0 217.4 C 785.0 217.4 803.0 219.9 839.0 223.0 C 875.0 226.1 929.0 232.9 929.0 232.9" fill="none" stroke="#b3c3e6" stroke-width="2.2"/>
<path d="M 477.6 220.6 L 486.4 220.6 L 482.0 229.4 Z" fill="#b3c3e6"/>
<path d="M 565.1 220.6 L 573.9 220.6 L 569.5 229.4 Z" fill="#b3c3e6"/>
<path d="M 654.6 221.8 L 663.4 221.8 L 659.0 230.6 Z" fill="#b3c3e6"/>
<path d="M 744.6 213.0 L 753.4 213.0 L 749.0 221.8 Z" fill="#b3c3e6"/>
<path d="M 834.6 218.6 L 843.4 218.6 L 839.0 227.4 Z" fill="#b3c3e6"/>
<path d="M 924.6 228.5 L 933.4 228.5 L 929.0 237.3 Z" fill="#b3c3e6"/>
<path d="M 482.0 206.0 C 482.0 206.0 534.5 194.4 569.5 194.4 C 605.3 194.4 623.2 194.4 659.0 197.0 C 695.0 199.6 713.0 220.2 749.0 225.0 C 785.0 229.8 803.0 229.8 839.0 229.8 C 875.0 229.8 929.0 226.7 929.0 226.7" fill="none" stroke="#7f9a64" stroke-width="2.2"/>
<path d="M 482.0 201.6 L 486.4 210.4 L 477.6 210.4 Z" fill="#7f9a64"/>
<path d="M 569.5 190.0 L 573.9 198.8 L 565.1 198.8 Z" fill="#7f9a64"/>
<path d="M 659.0 192.6 L 663.4 201.4 L 654.6 201.4 Z" fill="#7f9a64"/>
<path d="M 749.0 220.6 L 753.4 229.4 L 744.6 229.4 Z" fill="#7f9a64"/>
<path d="M 839.0 225.4 L 843.4 234.2 L 834.6 234.2 Z" fill="#7f9a64"/>
<path d="M 929.0 222.3 L 933.4 231.1 L 924.6 231.1 Z" fill="#7f9a64"/>
<path d="M 482.0 186.6 C 482.0 186.6 534.5 180.4 569.5 180.4 C 605.3 180.4 623.2 188.4 659.0 192.7 C 695.0 197.0 713.0 198.6 749.0 202.0 C 785.0 205.4 803.0 206.9 839.0 209.7 C 875.0 212.5 929.0 215.9 929.0 215.9" fill="none" stroke="#6d6e71" stroke-width="2.2"/>
<path d="M 477.6 182.2 L 486.4 182.2 L 482.0 191.0 Z" fill="#6d6e71"/>
<path d="M 565.1 176.0 L 573.9 176.0 L 569.5 184.8 Z" fill="#6d6e71"/>
<path d="M 654.6 188.3 L 663.4 188.3 L 659.0 197.1 Z" fill="#6d6e71"/>
<path d="M 744.6 197.6 L 753.4 197.6 L 749.0 206.4 Z" fill="#6d6e71"/>
<path d="M 834.6 205.3 L 843.4 205.3 L 839.0 214.1 Z" fill="#6d6e71"/>
<path d="M 924.6 211.5 L 933.4 211.5 L 929.0 220.3 Z" fill="#6d6e71"/>
<path d="M 482.0 184.0 C 482.0 184.0 534.5 183.0 569.5 183.0 C 605.3 183.0 623.2 184.5 659.0 184.5 C 695.0 184.5 713.0 182.5 749.0 182.5 C 785.0 182.5 803.0 184.7 839.0 187.0 C 875.0 189.3 929.0 194.0 929.0 194.0" fill="none" stroke="#b9babb" stroke-width="2.2"/>
<path d="M 482.0 179.6 L 486.4 188.4 L 477.6 188.4 Z" fill="#b9babb"/>
<path d="M 569.5 178.6 L 573.9 187.4 L 565.1 187.4 Z" fill="#b9babb"/>
<path d="M 659.0 180.1 L 663.4 188.9 L 654.6 188.9 Z" fill="#b9babb"/>
<path d="M 749.0 178.1 L 753.4 186.9 L 744.6 186.9 Z" fill="#b9babb"/>
<path d="M 839.0 182.6 L 843.4 191.4 L 834.6 191.4 Z" fill="#b9babb"/>
<path d="M 929.0 189.6 L 933.4 198.4 L 924.6 198.4 Z" fill="#b9babb"/>
<path d="M517 394.3 H537" stroke="#8b8b8d" stroke-width="2.5"/>
<circle cx="527.0" cy="394.3" r="5" fill="#8b8b8d"/>
<text x="543.7" y="399.8" font-size="14.5" fill="#333" text-anchor="start" font-weight="bold" textLength="108.3" lengthAdjust="spacingAndGlyphs">Austria Spruce</text>
<path d="M517 413.3 H537" stroke="#7f9fd8" stroke-width="2.5"/>
<path d="M 527.0 408.7 L 531.6 413.3 L 527.0 417.9 L 522.4 413.3 Z" fill="#7f9fd8"/>
<text x="543.7" y="418.8" font-size="14.5" fill="#333" text-anchor="start" font-weight="bold" textLength="240.6" lengthAdjust="spacingAndGlyphs">Canada Interior Mixed Softwood</text>
<path d="M517 432 H537" stroke="#e8986a" stroke-width="2.5"/>
<rect x="522.4" y="427.4" width="9.2" height="9.2" fill="#e8986a"/>
<text x="543.7" y="437.5" font-size="14.5" fill="#333" text-anchor="start" font-weight="bold" textLength="189.4" lengthAdjust="spacingAndGlyphs">Canada West Douglas-Fir</text>
<path d="M517 450.6 H537" stroke="#7f9a64" stroke-width="2.5"/>
<path d="M 527.0 446.0 L 531.6 455.2 L 522.4 455.2 Z" fill="#7f9a64"/>
<text x="543.7" y="456.1" font-size="14.5" fill="#333" text-anchor="start" font-weight="bold" textLength="165.9" lengthAdjust="spacingAndGlyphs">Canada West Hemlock</text>
<path d="M517 469.2 H537" stroke="#ef90c0" stroke-width="2.5"/>
<path d="M 522.4 464.6 L 531.6 464.6 L 527.0 473.8 Z" fill="#ef90c0"/>
<text x="543.7" y="474.7" font-size="14.5" fill="#333" text-anchor="start" font-weight="bold" textLength="170.0" lengthAdjust="spacingAndGlyphs">Czech Republic Spruce</text>
<path d="M516.4 501 L524.4 486.2 L532.5 501 Z" fill="#cccccc"/>
<text x="537" y="499" font-size="14.5" fill="#333" text-anchor="start" font-weight="normal" textLength="25.4" lengthAdjust="spacingAndGlyphs">1/6</text>
<path d="M566 486.2 L581.8 486.2 L573.9 500 Z" fill="#003399"/>
<g transform="translate(0,0)"><path d="M695.9 509.8 L701.5 525.3 L689.5 525.3 Z" fill="#9dbccc"/><path d="M708.5 506.7 L715 521.6 L702 521.6 Z" fill="#8fb2c4"/><path d="M703.6 513.9 L709.8 529.4 L697 529.4 Z" fill="#a9c8d6"/><path d="M704.4 516 L706.8 521 L702 521 Z" fill="#6cc05a"/><path d="M700 521 L702.5 525.5 L697.5 525.5 Z" fill="#6cc05a"/><text x="719" y="522.9" font-size="13.2" fill="#1e6a8c" text-anchor="start" font-weight="bold" textLength="120" lengthAdjust="spacingAndGlyphs">WOOD RESOURCES</text><text x="843.4" y="522.9" font-size="13.2" fill="#5cb54c" text-anchor="start" font-weight="bold" textLength="102.7" lengthAdjust="spacingAndGlyphs">INTERNATIONAL</text></g>
<text x="1137.4" y="140.5" font-size="22.3" fill="#333" text-anchor="start" font-weight="normal" textLength="230.5" lengthAdjust="spacing">Sawlog Prices Indices</text>
<path d="M1496.5 130.6 H1514.6" stroke="#666" stroke-width="3.4" stroke-linecap="round"/><path d="M1496.5 136.8 H1514.6" stroke="#666" stroke-width="3.4" stroke-linecap="round"/><path d="M1496.5 143 H1514.6" stroke="#666" stroke-width="3.4" stroke-linecap="round"/>
<path d="M1058 189.5 H1519" stroke="#e6e6e6" stroke-width="1"/>
<path d="M1058 265.5 H1519" stroke="#e6e6e6" stroke-width="1"/>
<path d="M1058 341.5 H1519" stroke="#e6e6e6" stroke-width="1"/>
<path d="M1058 418.5 H1519" stroke="#e6e6e6" stroke-width="1"/>
<path d="M1058 437.5 H1519" stroke="#000" stroke-width="1.6"/>
<path d="M1057.5 438 V449.5" stroke="#ccd6eb" stroke-width="1"/>
<path d="M1147.5 438 V449.5" stroke="#ccd6eb" stroke-width="1"/>
<path d="M1238.5 438 V449.5" stroke="#ccd6eb" stroke-width="1"/>
<path d="M1329.5 438 V449.5" stroke="#ccd6eb" stroke-width="1"/>
<path d="M1421.5 438 V449.5" stroke="#ccd6eb" stroke-width="1"/>
<path d="M1513.5 438 V449.5" stroke="#ccd6eb" stroke-width="1"/>
<text x="1058" y="461" font-size="14" fill="#666" text-anchor="middle" font-weight="normal" textLength="53.5" lengthAdjust="spacingAndGlyphs">1995 Q1</text>
<text x="1147.6" y="461" font-size="14" fill="#666" text-anchor="middle" font-weight="normal" textLength="53.5" lengthAdjust="spacingAndGlyphs">1995 Q2</text>
<text x="1239" y="461" font-size="14" fill="#666" text-anchor="middle" font-weight="normal" textLength="53.5" lengthAdjust="spacingAndGlyphs">1995 Q3</text>
<text x="1330.6" y="461" font-size="14" fill="#666" text-anchor="middle" font-weight="normal" textLength="53.5" lengthAdjust="spacingAndGlyphs">1995 Q4</text>
<text x="1422.8" y="461" font-size="14" fill="#666" text-anchor="middle" font-weight="normal" textLength="53.5" lengthAdjust="spacingAndGlyphs">1996 Q1</text>
<text x="1493.3" y="461" font-size="14" fill="#666" text-anchor="middle" font-weight="normal" textLength="53.5" lengthAdjust="spacingAndGlyphs">1996 Q2</text>
<path d="M 1058.0 386.5 C 1058.0 386.5 1112.0 371.2 1148.0 371.2 C 1184.4 371.2 1202.6 394.1 1239.0 394.1 C 1275.6 394.1 1293.9 394.1 1330.5 394.1 C 1367.3 394.1 1385.7 403.1 1422.5 409.4 C 1458.9 415.6 1513.5 425.4 1513.5 425.4" fill="none" stroke="#8b8b8d" stroke-width="2.5"/>
<circle cx="1058.0" cy="386.5" r="4.5" fill="#8b8b8d"/>
<circle cx="1148.0" cy="371.2" r="4.5" fill="#8b8b8d"/>
<circle cx="1239.0" cy="394.1" r="4.5" fill="#8b8b8d"/>
<circle cx="1330.5" cy="394.1" r="4.5" fill="#8b8b8d"/>
<circle cx="1422.5" cy="409.4" r="4.5" fill="#8b8b8d"/>
<circle cx="1513.5" cy="425.4" r="4.5" fill="#8b8b8d"/>
<path d="M 1058.0 218.5 C 1058.0 218.5 1112.0 188.1 1148.0 188.1 C 1184.4 188.1 1202.6 204.9 1239.0 211.0 C 1275.6 217.1 1293.9 211.0 1330.5 218.5 C 1367.3 226.0 1385.7 243.1 1422.5 256.8 C 1458.9 270.4 1513.5 286.8 1513.5 286.8" fill="none" stroke="#7f9fd8" stroke-width="2.5"/>
<path d="M 1058.0 214.0 L 1062.5 218.5 L 1058.0 223.0 L 1053.5 218.5 Z" fill="#7f9fd8"/>
<path d="M 1148.0 183.6 L 1152.5 188.1 L 1148.0 192.6 L 1143.5 188.1 Z" fill="#7f9fd8"/>
<path d="M 1239.0 206.5 L 1243.5 211.0 L 1239.0 215.5 L 1234.5 211.0 Z" fill="#7f9fd8"/>
<path d="M 1330.5 214.0 L 1335.0 218.5 L 1330.5 223.0 L 1326.0 218.5 Z" fill="#7f9fd8"/>
<path d="M 1422.5 252.3 L 1427.0 256.8 L 1422.5 261.3 L 1418.0 256.8 Z" fill="#7f9fd8"/>
<path d="M 1513.5 282.3 L 1518.0 286.8 L 1513.5 291.3 L 1509.0 286.8 Z" fill="#7f9fd8"/>
<path d="M 1058.0 310.5 C 1058.0 310.5 1112.0 294.7 1148.0 294.7 C 1184.4 294.7 1202.6 318.3 1239.0 318.3 C 1275.6 318.3 1293.9 318.3 1330.5 318.3 C 1367.3 318.3 1385.7 331.8 1422.5 340.8 C 1458.9 349.7 1513.5 362.9 1513.5 362.9" fill="none" stroke="#e8986a" stroke-width="2.5" stroke-dasharray="10,8"/>
<rect x="1053.5" y="306.0" width="9.0" height="9.0" fill="#e8986a"/>
<rect x="1143.5" y="290.2" width="9.0" height="9.0" fill="#e8986a"/>
<rect x="1234.5" y="313.8" width="9.0" height="9.0" fill="#e8986a"/>
<rect x="1326.0" y="313.8" width="9.0" height="9.0" fill="#e8986a"/>
<rect x="1418.0" y="336.3" width="9.0" height="9.0" fill="#e8986a"/>
<rect x="1509.0" y="358.4" width="9.0" height="9.0" fill="#e8986a"/>
<path d="M1029.8 496.8 H1049.3" stroke="#8b8b8d" stroke-width="2.5"/>
<circle cx="1039.5" cy="496.8" r="5" fill="#8b8b8d"/>
<text x="1056" y="502.40000000000003" font-size="15.4" fill="#333" text-anchor="start" font-weight="bold" textLength="96" lengthAdjust="spacingAndGlyphs">Global (GSPI)</text>
<path d="M1176.8 496.8 H1196.3" stroke="#7f9fd8" stroke-width="2.5"/>
<path d="M 1186.5 492.2 L 1191.1 496.8 L 1186.5 501.4 L 1182.0 496.8 Z" fill="#7f9fd8"/>
<text x="1203.5" y="502.40000000000003" font-size="15.4" fill="#333" text-anchor="start" font-weight="bold" textLength="115.3" lengthAdjust="spacingAndGlyphs">European (ESPI)</text>
<path d="M1343.6 496.8 H1363.1" stroke="#e8986a" stroke-width="2.5" stroke-dasharray="10,4"/>
<rect x="1348.8" y="492.2" width="9.2" height="9.2" fill="#e8986a"/>
<text x="1370" y="502.40000000000003" font-size="15.4" fill="#333" text-anchor="start" font-weight="bold" textLength="107" lengthAdjust="spacingAndGlyphs">Selected (SSPI)</text>
<g transform="translate(585.5,0)"><path d="M695.9 509.8 L701.5 525.3 L689.5 525.3 Z" fill="#9dbccc"/><path d="M708.5 506.7 L715 521.6 L702 521.6 Z" fill="#8fb2c4"/><path d="M703.6 513.9 L709.8 529.4 L697 529.4 Z" fill="#a9c8d6"/><path d="M704.4 516 L706.8 521 L702 521 Z" fill="#6cc05a"/><path d="M700 521 L702.5 525.5 L697.5 525.5 Z" fill="#6cc05a"/><text x="719" y="522.9" font-size="13.2" fill="#1e6a8c" text-anchor="start" font-weight="bold" textLength="120" lengthAdjust="spacingAndGlyphs">WOOD RESOURCES</text><text x="843.4" y="522.9" font-size="13.2" fill="#5cb54c" text-anchor="start" font-weight="bold" textLength="102.7" lengthAdjust="spacingAndGlyphs">INTERNATIONAL</text></g>
</svg>

<div class="btn" style="left:708px;width:68px;border-radius:4px 0 0 4px;"></div>
<div class="bt" style="left:682.5px;width:120px;text-align:center;top:616.50px">Copy</div>
<div class="btn" style="left:775px;width:63px;border-radius:0 4px 4px 0;"></div>
<div class="bt" style="left:746.9px;width:120px;text-align:center;top:616.50px">Print</div>
<div class="btn" style="left:863px;width:63px;border-radius:4px 0 0 4px;"></div>
<div class="bt" style="left:834px;width:120px;text-align:center;top:616.50px">CSV</div>
<div class="btn" style="left:925px;width:69px;border-radius:0;"></div>
<div class="bt" style="left:899.5px;width:120px;text-align:center;top:616.50px">Excel</div>
<div class="btn" style="left:993px;width:62px;border-radius:0 4px 4px 0;"></div>
<div class="bt" style="left:964px;width:120px;text-align:center;top:616.50px">PDF</div>
<div class="btn" style="left:1080px;width:111px;border-radius:4px;"></div>
<div class="bt" style="left:1068.3px;width:120px;text-align:center;top:616.50px">Columns</div>
<svg class="a" style="left:1165.5px;top:620.5px" width="13" height="8"><path d="M0.8 0.8 H11.6 L6.2 6.2 Z" fill="#212529"/></svg>
<div class="td" style="left:388.3px;top:663.60px;color:#000">Showing 1 to 21 of 21 entries</div>
<div class="td" style="left:1235.2px;top:660.80px;color:#000">Search:</div>
<div class="a" style="left:1304px;top:650px;width:207px;height:39px;border:1px solid #9c9c9c;border-radius:4px;background:#fff"></div>
<div class="a" style="left:1517px;top:593px;width:21px;height:243px;background:#f1f1f1"></div>
<div class="a" style="left:1517px;top:614px;width:21px;height:78px;background:#c1c1c1"></div>
<svg class="a" style="left:1517px;top:593px" width="21" height="21"><path d="M6 12.3 L10.5 7.8 L15 12.3" stroke="#505050" stroke-width="2.6" fill="none"/></svg>
<div class="a" style="left:389px;top:771px;width:1128px;height:64px;background:#f2f2f2"></div>
<div class="a" style="left:389px;top:696px;width:1128px;height:1px;background:#dee2e6"></div>
<div class="a" style="left:389px;top:770px;width:1128px;height:1px;background:#dee2e6"></div>
<div class="a" style="left:389px;top:835px;width:1128px;height:1px;background:#dee2e6"></div>
<div class="vl" style="left:389px;top:696px;height:140px"></div>
<div class="vl" style="left:499px;top:696px;height:140px"></div>
<div class="vl" style="left:609px;top:696px;height:140px"></div>
<div class="vl" style="left:705px;top:696px;height:140px"></div>
<div class="vl" style="left:815px;top:696px;height:140px"></div>
<div class="vl" style="left:926px;top:696px;height:140px"></div>
<div class="vl" style="left:1037px;top:696px;height:140px"></div>
<div class="vl" style="left:1147px;top:696px;height:140px"></div>
<div class="vl" style="left:1258px;top:696px;height:140px"></div>
<div class="vl" style="left:1368px;top:696px;height:140px"></div>
<div class="vl" style="left:1444px;top:696px;height:140px"></div>
<div class="vl" style="left:1516px;top:696px;height:140px"></div>
<div class="th" style="left:399px;top:738.60px;">Country</div>
<div class="th" style="left:509.6px;top:738.60px;">Species</div>
<div class="th" style="left:619px;top:711.50px;">Price</div>
<div class="th" style="left:619px;top:738.60px;">Series</div>
<div class="th" style="left:689.5px;width:120px;text-align:center;top:711.50px">Q1/1995</div>
<div class="th" style="left:689.5px;width:120px;text-align:center;top:738.60px">$/M3</div>
<div class="th" style="left:800.0px;width:120px;text-align:center;top:711.50px">Q2/1995</div>
<div class="th" style="left:800.0px;width:120px;text-align:center;top:738.60px">$/M3</div>
<div class="th" style="left:911.0px;width:120px;text-align:center;top:711.50px">Q3/1995</div>
<div class="th" style="left:911.0px;width:120px;text-align:center;top:738.60px">$/M3</div>
<div class="th" style="left:1021.5px;width:120px;text-align:center;top:711.50px">Q4/1995</div>
<div class="th" style="left:1021.5px;width:120px;text-align:center;top:738.60px">$/M3</div>
<div class="th" style="left:1132.0px;width:120px;text-align:center;top:711.50px">Q1/1996</div>
<div class="th" style="left:1132.0px;width:120px;text-align:center;top:738.60px">$/M3</div>
<div class="th" style="left:1242.5px;width:120px;text-align:center;top:711.50px">Q2/1996</div>
<div class="th" style="left:1242.5px;width:120px;text-align:center;top:738.60px">$/M3</div>
<div class="th" style="left:1378.8px;top:738.60px;">Q/Q</div>
<div class="th" style="left:1454.3px;top:738.60px;">Y/Y</div>
<svg class="a" style="left:475.5px;top:724px" width="8" height="18"><path d="M0.6 5.7 L4 1.2 L7.4 5.7 Z M0.6 12.8 L7.4 12.8 L4 17.3 Z" fill="#d6d6d6"/></svg>
<svg class="a" style="left:585.5px;top:724px" width="8" height="18"><path d="M0.6 5.7 L4 1.2 L7.4 5.7 Z M0.6 12.8 L7.4 12.8 L4 17.3 Z" fill="#d6d6d6"/></svg>
<svg class="a" style="left:681.5px;top:724px" width="8" height="18"><path d="M0.6 5.7 L4 1.2 L7.4 5.7 Z M0.6 12.8 L7.4 12.8 L4 17.3 Z" fill="#d6d6d6"/></svg>
<svg class="a" style="left:791.5px;top:724px" width="8" height="18"><path d="M0.6 5.7 L4 1.2 L7.4 5.7 Z M0.6 12.8 L7.4 12.8 L4 17.3 Z" fill="#d6d6d6"/></svg>
<svg class="a" style="left:902.5px;top:724px" width="8" height="18"><path d="M0.6 5.7 L4 1.2 L7.4 5.7 Z M0.6 12.8 L7.4 12.8 L4 17.3 Z" fill="#d6d6d6"/></svg>
<svg class="a" style="left:1013.5px;top:724px" width="8" height="18"><path d="M0.6 5.7 L4 1.2 L7.4 5.7 Z M0.6 12.8 L7.4 12.8 L4 17.3 Z" fill="#d6d6d6"/></svg>
<svg class="a" style="left:1123.5px;top:724px" width="8" height="18"><path d="M0.6 5.7 L4 1.2 L7.4 5.7 Z M0.6 12.8 L7.4 12.8 L4 17.3 Z" fill="#d6d6d6"/></svg>
<svg class="a" style="left:1234.5px;top:724px" width="8" height="18"><path d="M0.6 5.7 L4 1.2 L7.4 5.7 Z M0.6 12.8 L7.4 12.8 L4 17.3 Z" fill="#d6d6d6"/></svg>
<svg class="a" style="left:1344.5px;top:724px" width="8" height="18"><path d="M0.6 5.7 L4 1.2 L7.4 5.7 Z M0.6 12.8 L7.4 12.8 L4 17.3 Z" fill="#d6d6d6"/></svg>
<svg class="a" style="left:1420.5px;top:724px" width="8" height="18"><path d="M0.6 5.7 L4 1.2 L7.4 5.7 Z M0.6 12.8 L7.4 12.8 L4 17.3 Z" fill="#d6d6d6"/></svg>
<svg class="a" style="left:1492.5px;top:724px" width="8" height="18"><path d="M0.6 5.7 L4 1.2 L7.4 5.7 Z M0.6 12.8 L7.4 12.8 L4 17.3 Z" fill="#d6d6d6"/></svg>
<div class="td" style="left:395.2px;top:781.50px">Austria</div>
<div class="td" style="left:505.6px;top:781.50px">Spruce</div>
<div class="td" style="left:615.5px;top:781.50px">Austria</div>
<div class="td" style="left:615.5px;top:806.80px">Spruce</div>
<div class="td" style="left:1338px;width:100.3px;text-align:right;top:781.50px">-9%</div>
<div class="td" style="left:1410px;width:100px;text-align:right;top:781.50px">-18%</div>
</body></html>
